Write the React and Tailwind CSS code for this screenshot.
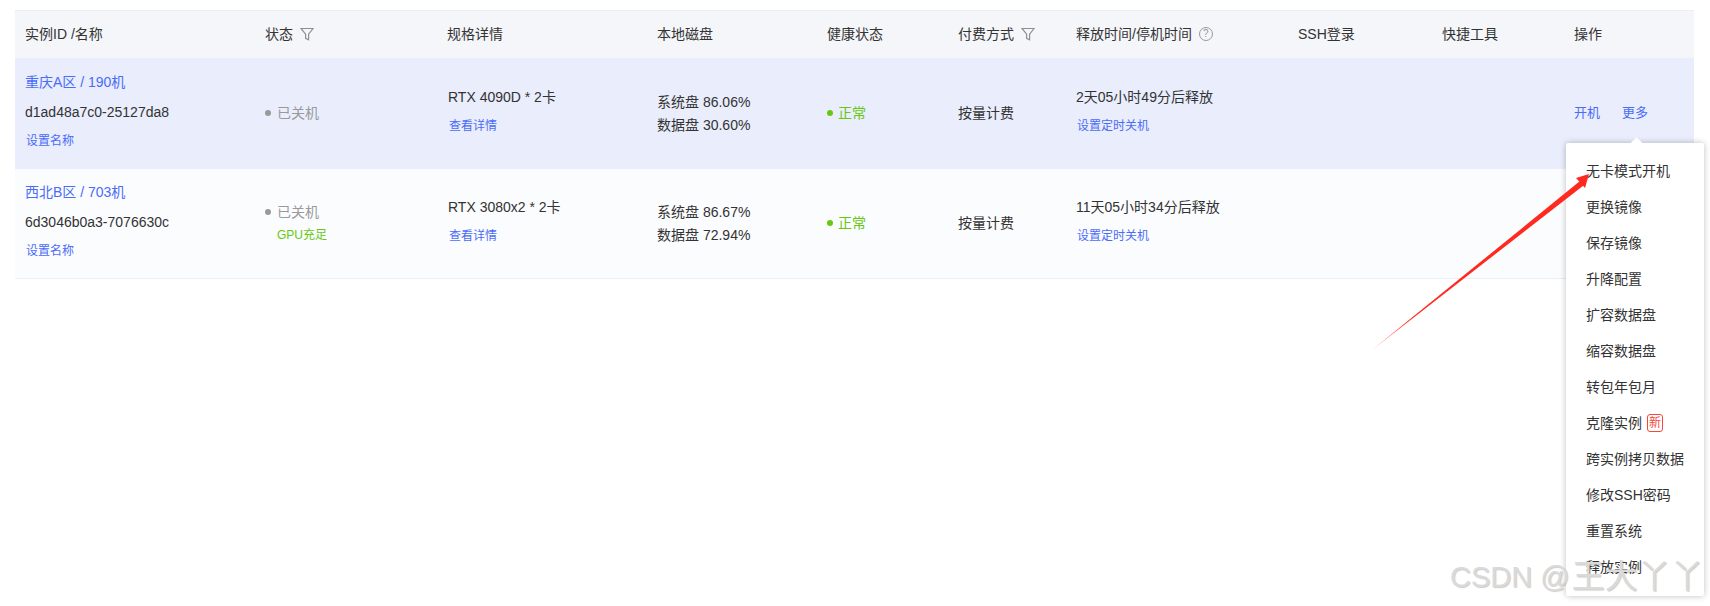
import { Fragment } from "react";

const COLS = [240, 182, 210, 170, 131, 118, 222, 144, 132, 130];
const HEAD = ["实例ID /名称", "状态", "规格详情", "本地磁盘", "健康状态", "付费方式", "释放时间/停机时间", "SSH登录", "快捷工具", "操作"];

const ROWS = [
  {
    name: "重庆A区 / 190机",
    id: "d1ad48a7c0-25127da8",
    spec: "RTX 4090D * 2卡",
    sys: "86.06%",
    data: "30.60%",
    time: "2天05小时49分后释放",
    bg: "bg-[#e9edfc]",
    h: "h-[111px]",
  },
  {
    name: "西北B区 / 703机",
    id: "6d3046b0a3-7076630c",
    spec: "RTX 3080x2 * 2卡",
    sys: "86.67%",
    data: "72.94%",
    time: "11天05小时34分后释放",
    gpu: true,
    bg: "bg-[#fbfcfe]",
    h: "h-[110px]",
  },
];

const MENU = ["无卡模式开机", "更换镜像", "保存镜像", "升降配置", "扩容数据盘", "缩容数据盘", "转包年包月", "克隆实例", "跨实例拷贝数据", "修改SSH密码", "重置系统", "释放实例"];

function Filter() {
  return (
    <svg width="14" height="14" viewBox="0 0 14 14" fill="none" stroke="#8f8f8f" strokeWidth="1.2" className="ml-[7px] shrink-0">
      <path d="M1 1.5h12L8.6 7.2v5.6L5.6 11.4V7.2z" />
    </svg>
  );
}

function Help() {
  return (
    <span className="ml-[7px] flex h-[14px] w-[14px] items-center justify-center rounded-full border border-[#999] text-[10px] leading-none text-[#999]">?</span>
  );
}

export default function App() {
  return (
    <div className="relative h-[606px] w-[1710px] overflow-hidden bg-white pl-[15px] pt-[10px] font-['Liberation_Sans','Noto_Sans_CJK_SC',sans-serif] text-sm text-[#333]">
      <table className="w-[1679px] table-fixed border-collapse">
        <colgroup>
          {COLS.map((w, i) => (
            <col key={i} style={{ width: w }} />
          ))}
        </colgroup>
        <thead>
          <tr className="h-[47px] border-t border-[#eceef3] bg-[#f5f6fa]">
            {HEAD.map((t, i) => (
              <th key={t} className="pl-[10px] text-left font-normal">
                <div className="flex items-center">
                  {t}
                  {(i === 1 || i === 5) && <Filter />}
                  {i === 6 && <Help />}
                </div>
              </th>
            ))}
          </tr>
        </thead>
        <tbody>
          {ROWS.map((r, idx) => (
            <tr key={r.id} className={`${r.bg} ${r.h} ${idx === 1 ? "border-b border-[#eceef3]" : ""}`}>
              <td className="pb-[4px] pl-[10px]">
                <div className="text-[#4a6cf7] leading-[20px]">{r.name}</div>
                <div className="mt-[10px] leading-[20px]">{r.id}</div>
                <div className="mt-[9px] pl-px text-xs leading-[20px] text-[#4a6cf7]">设置名称</div>
              </td>
              <td className="pl-[10px]">
                <div className="flex items-center leading-[20px] text-[#999]">
                  <span className="mr-[6px] h-[6px] w-[6px] rounded-full bg-[#999]" />
                  已关机
                </div>
                {r.gpu && <div className="mt-[3px] pl-[12px] text-xs leading-[20px] text-[#67c90f]">GPU充足</div>}
              </td>
              <td className="pb-[3px] pl-[11px]">
                <div className="leading-[20px]">{r.spec}</div>
                <div className="mt-[9px] pl-px text-xs leading-[20px] text-[#4a6cf7]">查看详情</div>
              </td>
              <td className="pl-[10px]">
                <div className="leading-[20px]">系统盘 {r.sys}</div>
                <div className="mt-[3px] leading-[20px]">数据盘 {r.data}</div>
              </td>
              <td className="pl-[10px]">
                <div className="flex items-center leading-[20px] text-[#67c90f]">
                  <span className="mr-[5px] h-[6px] w-[6px] rounded-full bg-[#67c90f]" />
                  正常
                </div>
              </td>
              <td className="pl-[10px]">按量计费</td>
              <td className="pb-[3px] pl-[10px]">
                <div className="leading-[20px]">{r.time}</div>
                <div className="mt-[9px] pl-px text-xs leading-[20px] text-[#4a6cf7]">设置定时关机</div>
              </td>
              <td />
              <td />
              <td className="pl-[10px] text-[13px] text-[#4a6cf7]">
                {idx === 0 && (
                  <Fragment>
                    <span>开机</span>
                    <span className="ml-[22px]">更多</span>
                  </Fragment>
                )}
              </td>
            </tr>
          ))}
        </tbody>
      </table>

      {/* dropdown of 更多 */}
      <div className="absolute left-[1566px] top-[143px] w-[138px] rounded-[2px] bg-white pb-[11px] pt-[10px] shadow-[0_0_6px_rgba(0,0,0,0.25)]">
        <span className="absolute -top-[4px] left-[66px] h-[9px] w-[9px] rotate-45 bg-white" />
        {MENU.map((m) => (
          <div key={m} className="flex h-[36px] items-center pl-[20px]">
            {m}
            {m === "克隆实例" && (
              <span className="ml-[5px] flex h-[18px] w-[16px] items-center justify-center rounded-[3px] border border-[#f5483b] text-xs leading-none text-[#f5483b]">新</span>
            )}
          </div>
        ))}
      </div>

      {/* annotation arrow */}
      <svg className="pointer-events-none absolute left-0 top-0" width="1710" height="606">
        <defs>
          <linearGradient id="tail" gradientUnits="userSpaceOnUse" x1="1372" y1="350" x2="1412" y2="318">
            <stop offset="0" stopColor="#ff2a1f" stopOpacity="0.5" />
            <stop offset="1" stopColor="#ff2a1f" />
          </linearGradient>
        </defs>
        <path d="M1372 350L1580 181L1583.5 185.5z" fill="url(#tail)" />
        <path d="M1589 174L1576 178L1585 188z" fill="#ff2a1f" />
      </svg>

      {/* watermark */}
      <div className="pointer-events-none absolute left-[1450px] top-[558px] flex items-center whitespace-nowrap text-[#dadada] [text-shadow:1px_1px_1px_rgba(0,0,0,0.2)]">
        <span className="text-[29px] leading-[38px]">CSDN @</span>
        <span className="ml-[2px] text-[33px] leading-[38px]">王大丫丫</span>
      </div>
    </div>
  );
}
